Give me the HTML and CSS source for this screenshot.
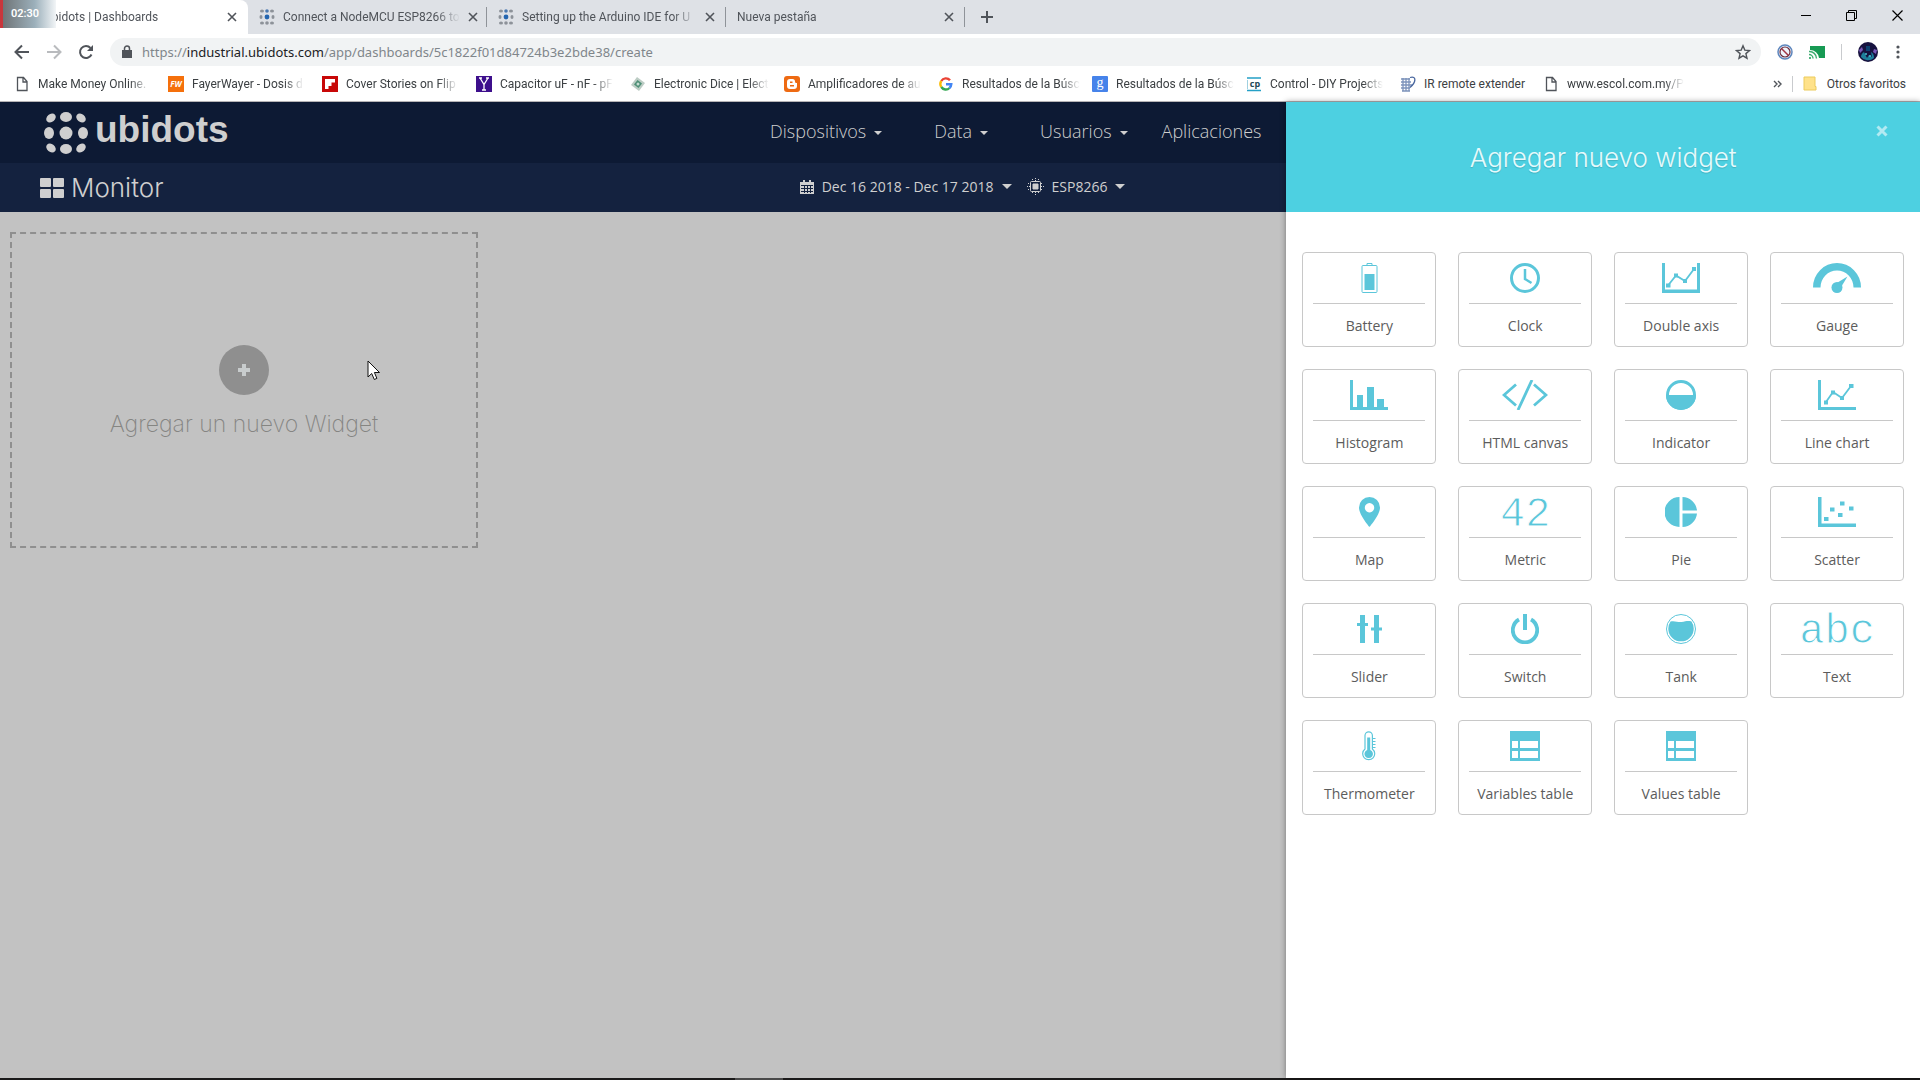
FILE: index.html
```html
<!doctype html>
<html lang="es">
<head>
    <meta charset="UTF-8">
    <meta name="viewport" content="width=device-width, initial-scale=1.0">
    <title>Ubidots | Dashboards</title>
    <link rel="stylesheet" href="styles.css">
</head>
<body>
<!-- shared icons -->
<svg class="sprite" width="0" height="0">
    <symbol id="dots" viewBox="0 0 16 16">
        <g fill="#8d9299">
            <ellipse cx="3" cy="2" rx="2" ry="1.5"/><ellipse cx="13" cy="2" rx="2" ry="1.5"/>
            <ellipse cx="2" cy="8" rx="1.5" ry="2"/><ellipse cx="14" cy="8" rx="1.5" ry="2"/>
            <ellipse cx="3" cy="14" rx="2" ry="1.5"/><ellipse cx="8" cy="14" rx="1.8" ry="1.8"/><ellipse cx="13" cy="14" rx="2" ry="1.5"/>
        </g>
        <circle cx="8" cy="8" r="2.4" fill="#2566b0"/>
        <circle cx="8" cy="2" r="1.8" fill="#4b79b0"/>
    </symbol>
    <symbol id="cross" viewBox="0 0 10 10">
        <path d="M1 1L9 9M9 1L1 9" stroke="currentColor" stroke-width="1.6" fill="none"/>
    </symbol>
    <symbol id="file" viewBox="0 0 16 16">
        <path d="M3.5 1.5h6l3.5 4v9h-9.5zM9 1.5v4.500h4" stroke="#50545a" stroke-width="1.3" fill="#fff"/>
    </symbol>
    <symbol id="table" viewBox="0 0 30 30">
        <path d="M0 0h30v30H0z"/>
        <path d="M2 10h6v7H2zM10 10h18v7H10zM2 20h6v7H2zM10 20h18v7H10z" fill="#fff"/>
    </symbol>
</svg>

<div class="browser">
    <div class="tabs">
        <div class="tab tab-active">
            <span class="tab-title">Ubidots | Dashboards</span>
            <button class="tab-close" aria-label="Cerrar"><svg width="10" height="10"><use href="#cross"/></svg></button>
            <span class="timer">02:30</span>
        </div>
        <div class="tab">
            <svg width="16" height="16"><use href="#dots"/></svg>
            <span class="tab-title">Connect a NodeMCU ESP8266 to</span>
            <button class="tab-close" aria-label="Cerrar"><svg width="10" height="10"><use href="#cross"/></svg></button>
        </div>
        <div class="tab">
            <svg width="16" height="16"><use href="#dots"/></svg>
            <span class="tab-title">Setting up the Arduino IDE for U</span>
            <button class="tab-close" aria-label="Cerrar"><svg width="10" height="10"><use href="#cross"/></svg></button>
        </div>
        <div class="tab">
            <span class="tab-title">Nueva pestaña</span>
            <button class="tab-close" aria-label="Cerrar"><svg width="10" height="10"><use href="#cross"/></svg></button>
        </div>
        <button class="new-tab" aria-label="Nueva pestaña">
            <svg width="12" height="12" viewBox="0 0 12 12"><path d="M6 0v12M0 6h12" stroke="#50545a" stroke-width="2"/></svg>
        </button>
        <div class="window-btns">
            <button aria-label="Minimizar"><svg width="10" height="10" viewBox="0 0 10 10"><path d="M0 5.500h10" stroke="#000"/></svg></button>
            <button aria-label="Restaurar"><svg width="11" height="11" viewBox="0 0 11 11"><path d="M.5 2.500h8v8h-8zM2.500 2.500v-2h8v8h-2" stroke="#000" fill="none"/></svg></button>
            <button aria-label="Cerrar ventana"><svg width="11" height="11" viewBox="0 0 11 11"><path d="M.5.5l10 10M10.500.5l-10 10" stroke="#000" stroke-width="1.200"/></svg></button>
        </div>
    </div>

    <div class="toolbar">
        <button aria-label="Atrás"><svg width="16" height="16" viewBox="0 0 16 16"><path d="M15 8H2M8 1.500L1.500 8L8 14.500" stroke="#50545a" stroke-width="2" fill="none"/></svg></button>
        <button aria-label="Adelante"><svg width="16" height="16" viewBox="0 0 16 16"><path d="M1 8h13M8 1.500L14.500 8L8 14.500" stroke="#b9bbbe" stroke-width="2" fill="none"/></svg></button>
        <button aria-label="Recargar"><svg width="16" height="16" viewBox="0 0 16 16"><path d="M13.500 10.500A6 6 0 1 1 12.500 4" stroke="#50545a" stroke-width="2" fill="none"/><path d="M15 1v6H9z" fill="#50545a"/></svg></button>
        <div class="omnibox">
            <svg width="10" height="14" viewBox="0 0 10 14"><path d="M0 5h10v8H0z" fill="#50545a"/><path d="M2.500 5V3.500a2.500 2.500 0 0 1 5 0V5" stroke="#50545a" stroke-width="1.500" fill="none"/></svg>
            <span class="url">https://<b>industrial.ubidots.com</b>/app/dashboards/5c1822f01d84724b3e2bde38/create</span>
            <button aria-label="Marcar"><svg width="16" height="16" viewBox="0 0 16 16"><path d="M8 1.800l1.800 4.300 4.700.4-3.600 3.100 1.100 4.600L8 11.800l-4 2.400 1.100-4.600L1.500 6.500l4.700-.4z" stroke="#50545a" stroke-width="1.400" fill="none"/></svg></button>
        </div>
        <div class="extensions">
            <button aria-label="Bloqueador"><svg width="16" height="16" viewBox="0 0 16 16"><circle cx="8" cy="8" r="7" fill="#eef3fb" stroke="#5d86bd" stroke-width="1.500"/><circle cx="8" cy="8" r="5" stroke="#6b2c3c" stroke-width="1.200" fill="none"/><path d="M4.500 4.500l7 7" stroke="#a23545" stroke-width="1.500"/></svg></button>
            <button aria-label="Transmitir"><svg width="16" height="13" viewBox="0 0 16 13"><path d="M1 0h15v12h-6A9 9 0 0 0 1 4z" fill="#179a54"/><path d="M0 5.500a7 7 0 0 1 7.500 7M0 8.500a4 4 0 0 1 4 4" stroke="#3fae72" stroke-width="1.400" fill="none"/><circle cx="1" cy="12" r="1" fill="#179a54"/></svg></button>
            <i class="separator"></i>
            <button aria-label="Perfil"><svg width="20" height="20" viewBox="0 0 20 20"><circle cx="10" cy="10" r="10" fill="#17123f"/><path d="M6 10c-2 1-3 3-3 5a9 9 0 0 0 13 1c0-3-1-5-3-6l1 5-3-2-2 3z" fill="#1d7f9b"/><path d="M8 4h4v5H8z" fill="#0c4270"/><path d="M1 8l3-3 1 3-3 3zM16 7l3 1-1 4-3-2z" fill="#7a58b8"/><circle cx="8" cy="12" r="1" fill="#48c3d0"/><circle cx="12" cy="14" r="1" fill="#48c3d0"/></svg></button>
            <button aria-label="Menú"><svg width="8" height="14" viewBox="0 0 8 14" fill="#50545a"><circle cx="4" cy="2" r="1.600"/><circle cx="4" cy="7" r="1.600"/><circle cx="4" cy="12" r="1.600"/></svg></button>
        </div>
    </div>

    <nav class="bookmarks">
        <a class="bookmark" href="#"><svg width="16" height="16"><use href="#file"/></svg><span>Make Money Online.</span></a>
        <a class="bookmark" href="#"><svg width="16" height="16" viewBox="0 0 16 16"><path d="M0 0h16v16H0z" fill="#f5700c"/><text class="fav-fw" x="8" y="11" text-anchor="middle">FW</text></svg><span>FayerWayer - Dosis d</span></a>
        <a class="bookmark" href="#"><svg width="16" height="16" viewBox="0 0 16 16"><path d="M0 0h16v16H0z" fill="#c80808"/><path d="M3 3h10v3.500H9.500V10H6.500v3H3z" fill="#fff"/></svg><span>Cover Stories on Flip</span></a>
        <a class="bookmark" href="#"><svg width="16" height="16" viewBox="0 0 16 16"><path d="M0 0h16v16H0z" fill="#3d0f8c"/><path d="M4 2l4 6.500L12 2M8 8.500V14M3 2h3M10 2h3M6 14h4" stroke="#fff" stroke-width="1.300" fill="none"/></svg><span>Capacitor uF - nF - pF</span></a>
        <a class="bookmark" href="#"><svg width="16" height="16" viewBox="0 0 16 16"><path d="M7 1l8 6-6 8-8-6z" fill="#bcccc4"/><path d="M7.500 4l4.500 3.500L8.500 12 4 8.500z" fill="#4e8f76"/><circle cx="8" cy="8" r="1.500" fill="#c6dcd2"/></svg><span>Electronic Dice | Elect</span></a>
        <a class="bookmark" href="#"><svg width="16" height="16" viewBox="0 0 16 16"><rect width="16" height="16" rx="3" fill="#ee6a12"/><path d="M6 3h2.500A2.500 2.500 0 0 1 11 5.500c0 1 .5 1.500 2 1.500v3a3 3 0 0 1-3 3H6a3 3 0 0 1-3-3V6a3 3 0 0 1 3-3z" fill="#fff"/><path d="M6 6.300h2.500M6 9.800h4" stroke="#ee6a12" stroke-width="1.400"/></svg><span>Amplificadores de au</span></a>
        <a class="bookmark" href="#"><svg width="16" height="16" viewBox="0 0 16 16" fill="none" stroke-width="2.400"><path d="M3.300 5A5.300 5.300 0 0 1 12 4.300" stroke="#ea4335"/><path d="M3.300 5a5.500 5.500 0 0 0 0 6" stroke="#fbbc05"/><path d="M3.300 11a5.300 5.300 0 0 0 8.200 1" stroke="#34a853"/><path d="M11.500 12A5.300 5.300 0 0 0 13.300 8.300H8" stroke="#4285f4"/></svg><span>Resultados de la Búsc</span></a>
        <a class="bookmark" href="#"><svg width="16" height="16" viewBox="0 0 16 16"><rect width="16" height="16" rx="1" fill="#4683ea"/><text class="fav-g" x="8" y="11" text-anchor="middle">g</text></svg><span>Resultados de la Búsc</span></a>
        <a class="bookmark" href="#"><svg width="16" height="16" viewBox="0 0 16 16"><path d="M1 2h14M1 14.500h14" stroke="#25a0c6" stroke-width="1.500"/><path d="M1.500 4v9" stroke="#9fd0df"/><text class="fav-cp" x="9" y="11" text-anchor="middle">cp</text></svg><span>Control - DIY Projects</span></a>
        <a class="bookmark bookmark-short" href="#"><svg width="16" height="16" viewBox="0 0 16 16"><path d="M1 3h9M1 6h10M1 9h11M1 12h9M2 15h8M3 2v13M6 2v13M9 2v13" stroke="#7c93bb" stroke-width="1.300"/><path d="M10 1.500c7-2 6 5 0 10" stroke="#47659e" stroke-width="1.300" fill="none"/></svg><span>IR remote extender</span></a>
        <a class="bookmark" href="#"><svg width="16" height="16"><use href="#file"/></svg><span>www.escol.com.my/P</span></a>
        <div class="bookmarks-end">
            <button aria-label="Más marcadores"><svg width="9" height="8" viewBox="0 0 9 8"><path d="M1 1l3 3-3 3M5 1l3 3-3 3" stroke="#50545a" stroke-width="1.400" fill="none"/></svg></button>
            <i class="separator"></i>
            <a class="others" href="#"><svg width="14" height="16" viewBox="0 0 14 16"><path d="M1 1h11v9.500h1V14H1z" fill="#ffe28a" stroke="#eccb5c"/></svg>Otros favoritos</a>
        </div>
    </nav>
</div>

<div class="app">
    <main class="main">
        <header class="header">
            <a class="logo" href="#">
                <svg width="44" height="42" viewBox="0 0 44 42" fill="#cfcfcf">
                    <ellipse cx="7" cy="6" rx="5.200" ry="4" transform="rotate(-40 7 6)"/><ellipse cx="22" cy="5" rx="6" ry="5"/><ellipse cx="37" cy="6" rx="5.200" ry="4" transform="rotate(40 37 6)"/>
                    <ellipse cx="5" cy="21" rx="5" ry="6"/><ellipse cx="22" cy="21" rx="6.500" ry="6.500"/><ellipse cx="39" cy="21" rx="5" ry="6"/>
                    <ellipse cx="7" cy="36" rx="5.200" ry="4" transform="rotate(40 7 36)"/><ellipse cx="22" cy="37" rx="6" ry="5"/><ellipse cx="37" cy="36" rx="5.200" ry="4" transform="rotate(-40 37 36)"/>
                </svg>
                <span>ubidots</span>
            </a>
            <nav class="menu">
                <a class="menu-wide" href="#">Dispositivos<i class="caret"></i></a>
                <a class="menu-wide" href="#">Data<i class="caret"></i></a>
                <a href="#">Usuarios<i class="caret"></i></a>
                <a href="#">Aplicaciones</a>
            </nav>
        </header>
        <div class="subheader">
            <h1 class="title">
                <svg width="24" height="20" viewBox="0 0 24 20" fill="#cfcfcf"><rect width="11" height="9" rx="1"/><rect x="13" width="11" height="9" rx="1"/><rect y="11" width="11" height="9" rx="1"/><rect x="13" y="11" width="11" height="9" rx="1"/></svg>
                Monitor
            </h1>
            <div class="filters">
                <button class="filter">
                    <svg width="14" height="14" viewBox="0 0 14 14"><path d="M0 2h14v12H0z" fill="#cfcfcf"/><path d="M1 5.500h12M1 8.500h12M1 11.500h12M4.500 5v8M7.500 5v8M10.500 5v8" stroke="#14223f"/><path d="M3 0h2v3H3zM9 0h2v3H9z" fill="#cfcfcf"/></svg>
                    Dec 16 2018 - Dec 17 2018 <i class="caret"></i>
                </button>
                <button class="filter">
                    <svg width="17" height="17" viewBox="0 0 17 17" fill="none" stroke="#cfcfcf"><rect x="3.500" y="3.500" width="10" height="10" rx="1"/><path d="M6 6h5v5H6z" fill="#cfcfcf"/><path d="M5.500 1v2M8.500 0v3M11.500 1v2M5.500 14v2M8.500 14v3M11.500 14v2M1 5.500h2M0 8.500h3M1 11.500h2M14 5.500h2M14 8.500h3M14 11.500h2" stroke-dasharray="1 1"/></svg>
                    ESP8266 <i class="caret"></i>
                </button>
            </div>
        </div>
        <div class="board">
            <button class="add-widget">
                <span class="plus"><svg width="12" height="12" viewBox="0 0 12 12"><path d="M6 0v12M0 6h12" stroke="#c8cccd" stroke-width="4"/></svg></span>
                <span>Agregar un nuevo Widget</span>
            </button>
            <svg class="cursor" width="14" height="21" viewBox="0 0 14 21"><path d="M1 1v16l3.700-3.500 2.600 6 2.600-1.100-2.500-5.900H12.500z" fill="#fff" stroke="#111"/></svg>
        </div>
    </main>

    <aside class="panel">
        <div class="panel-head">
            <button class="panel-close" aria-label="Cerrar panel"><svg width="12" height="12" viewBox="0 0 12 12"><path d="M1.500 1.500l9 9M10.500 1.500l-9 9" stroke="#b2eaf2" stroke-width="3"/></svg></button>
            <h2>Agregar nuevo widget</h2>
        </div>
        <div class="widgets">
            <button class="widget">
                <span class="widget-icon"><svg width="17" height="30" viewBox="0 0 17 30"><rect x="1" y="2.500" width="15" height="27" rx="1" fill="none" stroke="#5bc6da"/><path d="M6 .5h5v2H6z" fill="none" stroke="#5bc6da"/><path d="M3.500 11h10v16h-10z"/></svg></span>
                <span class="widget-name">Battery</span>
            </button>
            <button class="widget">
                <span class="widget-icon"><svg width="30" height="30" viewBox="0 0 30 30" fill="none" stroke="#5bc6da" stroke-width="3"><circle cx="15" cy="15" r="13.500"/><path d="M15 6v10l6.500 4" stroke-width="2.500"/></svg></span>
                <span class="widget-name">Clock</span>
            </button>
            <button class="widget">
                <span class="widget-icon"><svg width="38" height="30" viewBox="0 0 38 30"><path d="M0 0h3v26.500h32V0h3v30H0z"/><path d="M6 22.500l8-10 9 5.500 9-12" fill="none" stroke="#5bc6da" stroke-width="1.800"/><path d="M4 20.500h4.500v4H4zM12 10.500h4v4h-4zM21 16h4v4h-4zM30 4h4v4h-4z"/></svg></span>
                <span class="widget-name">Double axis</span>
            </button>
            <button class="widget">
                <span class="widget-icon"><svg width="48" height="30" viewBox="0 0 48 30"><path d="M0 24.500a24 24.500 0 0 1 48 0h-7.500a16.500 17 0 0 0-33 0z"/><circle cx="24" cy="24.500" r="5.500"/><path d="M20.500 22l14-8.500-8.500 14z"/></svg></span>
                <span class="widget-name">Gauge</span>
            </button>
            <button class="widget">
                <span class="widget-icon"><svg width="38" height="30" viewBox="0 0 38 30"><path d="M0 0h3v27h4V15h6v12h4V7h7v20h3v-8h7v8h4v3H0z"/></svg></span>
                <span class="widget-name">Histogram</span>
            </button>
            <button class="widget">
                <span class="widget-icon"><svg width="46" height="30" viewBox="0 0 46 30" fill="none" stroke="#5bc6da" stroke-width="2.800"><path d="M14 4.500L2 15l12 10.500M32 4.500L44 15 32 25.500M30 0L16 30"/></svg></span>
                <span class="widget-name">HTML canvas</span>
            </button>
            <button class="widget">
                <span class="widget-icon"><svg width="30" height="30" viewBox="0 0 30 30"><circle cx="15" cy="15" r="13.500" fill="none" stroke="#5bc6da" stroke-width="3"/><path d="M0 15h30a15 15 0 0 1-30 0z"/></svg></span>
                <span class="widget-name">Indicator</span>
            </button>
            <button class="widget">
                <span class="widget-icon"><svg width="38" height="30" viewBox="0 0 38 30"><path d="M0 0h3v27h35v3H0z"/><path d="M8 22l7-10 9 6 9-12" fill="none" stroke="#5bc6da" stroke-width="1.800"/><path d="M6 20.500h4v4H6zM13 10.500h4v4h-4zM22 16h4v4h-4zM31 4h4.500v4H31z"/></svg></span>
                <span class="widget-name">Line chart</span>
            </button>
            <button class="widget">
                <span class="widget-icon"><svg width="21" height="30" viewBox="0 0 21 30"><path d="M10.500 0A10.500 10.500 0 0 1 21 10.500C21 18 10.500 30 10.500 30S0 18 0 10.500A10.500 10.500 0 0 1 10.500 0zM10.500 6a4.700 4.700 0 1 0 .01 0z" fill-rule="evenodd"/></svg></span>
                <span class="widget-name">Map</span>
            </button>
            <button class="widget">
                <span class="widget-icon widget-glyph">42</span>
                <span class="widget-name">Metric</span>
            </button>
            <button class="widget">
                <span class="widget-icon"><svg width="32" height="30" viewBox="0 0 32 30"><path d="M14.500 0v30a15 15 0 0 1 0-30zM17.500 0A15 15 0 0 1 32 13.500H17.500zM17.500 16.500H32A15 15 0 0 1 17.500 30z"/></svg></span>
                <span class="widget-name">Pie</span>
            </button>
            <button class="widget">
                <span class="widget-icon"><svg width="38" height="30" viewBox="0 0 38 30"><path d="M0 0h3.500v26.500H38V30H0zM6 20h4.500v4H6zM12 10.500h4.500v4H12zM20 16h4.500v4H20zM22 4.500h4.500v4H22zM31 9.500h4.500v4H31z"/></svg></span>
                <span class="widget-name">Scatter</span>
            </button>
            <button class="widget">
                <span class="widget-icon"><svg width="25" height="30" viewBox="0 0 25 30"><path d="M3 1h5v28H3zM0 9h11v3H0zM17 1h5v28h-5zM14 13.500h11v3H14z"/></svg></span>
                <span class="widget-name">Slider</span>
            </button>
            <button class="widget">
                <span class="widget-icon"><svg width="28" height="30" viewBox="0 0 28 30"><path d="M8 5.500a12.200 12.200 0 1 0 12 0" fill="none" stroke="#5bc6da" stroke-width="3.800"/><path d="M12 0h4v16h-4z"/></svg></span>
                <span class="widget-name">Switch</span>
            </button>
            <button class="widget">
                <span class="widget-icon"><svg width="30" height="30" viewBox="0 0 30 30"><circle cx="15" cy="15" r="14.500" fill="none" stroke="#5bc6da"/><path d="M4.500 7.500c4-1 7 .8 11 .5s6-1.500 10-.5A12.700 12.700 0 1 1 4.500 7.500z"/></svg></span>
                <span class="widget-name">Tank</span>
            </button>
            <button class="widget">
                <span class="widget-icon widget-glyph">abc</span>
                <span class="widget-name">Text</span>
            </button>
            <button class="widget">
                <span class="widget-icon"><svg width="14" height="30" viewBox="0 0 14 30"><path d="M3 18V4.500a3.700 3.700 0 0 1 7.400 0V18a6 6 0 1 1-7.400 0z" fill="none" stroke="#5bc6da" stroke-width="1.200"/><path d="M5.200 19V6.500h3V19a4.200 4.200 0 1 1-3 0zM11 7h2.500v1H11zM11 10h2.500v1H11zM11 13h2.500v1H11zM11 16h2.500v1H11z"/></svg></span>
                <span class="widget-name">Thermometer</span>
            </button>
            <button class="widget">
                <span class="widget-icon"><svg width="30" height="30"><use href="#table"/></svg></span>
                <span class="widget-name">Variables table</span>
            </button>
            <button class="widget">
                <span class="widget-icon"><svg width="30" height="30"><use href="#table"/></svg></span>
                <span class="widget-name">Values table</span>
            </button>
        </div>
    </aside>
</div>
<div class="taskbar"><i></i></div>
</body>
</html>
```

FILE: styles.css
```css
/*reset*/
* {
    box-sizing: border-box;
}
body, h1, h2, button {
    margin: 0;
    padding: 0;
}
body {
    display: flex;
    flex-direction: column;
    min-height: 100vh;
    font: 12px/16px "Open Sans", "Noto Sans", sans-serif;
    color: #50545a;
    background-color: #fff;
}
button {
    border: none;
    background: none;
    font: inherit;
    color: inherit;
}
a {
    color: inherit;
    text-decoration: none;
}
svg {
    flex: none;
    display: block;
}
.sprite {
    position: absolute;
}
/*/reset*/

/* browser */
.browser {
    font-family: Roboto, "Noto Sans", sans-serif;
    border-bottom: 1px solid #b6b4b6;
}
.tabs {
    display: flex;
    align-items: center;
    height: 34px;
    background-color: #dee1e6;
}
.tab {
    position: relative;
    display: flex;
    align-items: center;
    gap: 8px;
    width: 239px;
    height: 20px;
    padding: 0 10px 0 11px;
    border-right: 1px solid #8f9399;
}
.tab-active {
    width: 248px;
    height: 34px;
    padding: 0 11px 0 44px;
    border: none;
    border-radius: 0 8px 0 0;
    background-color: #fff;
}
.tab-title {
    flex: 1;
    white-space: nowrap;
    -webkit-mask-image: linear-gradient(to left, transparent, #000 24px);
    mask-image: linear-gradient(to left, transparent, #000 24px);
}
.timer {
    position: absolute;
    top: 0;
    left: 0;
    width: 56px;
    height: 28px;
    padding-left: 8px;
    border-left: 3px solid #c9363c;
    font-size: 11px;
    line-height: 28px;
    font-weight: 600;
    color: #fff;
    background: linear-gradient(to right, #6f7477, #9cb0bb 60%, #f2f5f7);
}
.new-tab {
    padding: 0 16px;
}
.window-btns {
    display: flex;
    gap: 35px;
    margin-left: auto;
    padding: 0 17px 4px 0;
}
.toolbar {
    display: flex;
    align-items: center;
    gap: 16px;
    padding: 4px 18px 2px 14px;
}
.omnibox {
    flex: 1;
    display: flex;
    align-items: center;
    gap: 10px;
    height: 28px;
    padding: 0 10px 0 12px;
    border-radius: 14px;
    background-color: #f1f3f4;
}
.url {
    flex: 1;
    font-family: "Noto Sans", sans-serif;
    font-size: 13px;
    color: #80868b;
}
.url b {
    font-weight: 400;
    color: #202124;
}
.extensions {
    display: flex;
    align-items: center;
    gap: 16px;
}
.separator {
    width: 1px;
    height: 16px;
    background-color: #c9cbce;
}
.bookmarks {
    display: flex;
    align-items: center;
    height: 33px;
    padding: 0 14px 2px;
    color: #3c4043;
}
.bookmark {
    display: flex;
    align-items: center;
    gap: 8px;
    width: 154px;
    padding-right: 18px;
}
.bookmark span {
    flex: 1;
    white-space: nowrap;
    -webkit-mask-image: linear-gradient(to left, transparent, #000 20px);
    mask-image: linear-gradient(to left, transparent, #000 20px);
}
.bookmark-short {
    width: 143px;
    padding-right: 12px;
}
.bookmark-short span {
    -webkit-mask-image: none;
    mask-image: none;
}
.bookmarks-end,
.others {
    display: flex;
    align-items: center;
    gap: 10px;
}
.bookmarks-end {
    margin-left: auto;
}
.fav-fw {
    font: italic bold 8px "Open Sans", sans-serif;
    fill: #fff;
}
.fav-g {
    font: 14px "Liberation Serif", serif;
    fill: #fff;
}
.fav-cp {
    font: bold 9px "Open Sans", sans-serif;
    fill: #1d4756;
}

/* app */
.app {
    flex: 1;
    display: flex;
}
.main {
    flex: 67;
    display: flex;
    flex-direction: column;
    background-color: #c2c2c2;
}
.header {
    display: flex;
    align-items: center;
    justify-content: space-between;
    height: 61px;
    padding: 0 25px 0 44px;
    color: #cfcfcf;
    background-color: #0d1a34;
}
.logo {
    display: flex;
    align-items: center;
    gap: 7px;
    font: bold 37px/40px "Liberation Sans", sans-serif;
}
.logo span {
    padding-bottom: 6px;
}
.menu {
    display: flex;
    gap: 34px;
    padding-bottom: 4px;
    font-size: 18px;
    line-height: 24px;
    font-weight: 300;
}
.menu-wide {
    padding-right: 18px;
}
.caret {
    display: inline-block;
    margin-left: 8px;
    border: 4px solid transparent;
    border-top-color: currentColor;
    border-bottom: none;
    vertical-align: middle;
}
.subheader {
    display: flex;
    align-items: center;
    justify-content: space-between;
    height: 49px;
    padding: 0 161px 0 40px;
    color: #cfcfcf;
    background-color: #14223f;
}
.title {
    display: flex;
    align-items: center;
    gap: 7px;
    font: 300 26px/30px Inter, sans-serif;
}
.filters {
    display: flex;
    gap: 15px;
    padding-bottom: 2px;
}
.filter {
    display: flex;
    align-items: center;
    gap: 8px;
    font-size: 14px;
}
.filter .caret {
    margin-left: 0;
    border-width: 5px;
    border-bottom: none;
}
.board {
    position: relative;
    flex: 1;
    padding: 20px 10px;
}
.add-widget {
    display: flex;
    flex-direction: column;
    align-items: center;
    justify-content: center;
    gap: 16px;
    width: 468px;
    max-width: 100%;
    height: 316px;
    padding-top: 2px;
    border: 2px dashed #8f8f8f;
    font: 200 23px/26px Inter, sans-serif;
    color: #858582;
}
.plus {
    display: flex;
    align-items: center;
    justify-content: center;
    width: 50px;
    height: 50px;
    border-radius: 50%;
    background-color: #8f8f8f;
}
.cursor {
    position: absolute;
    top: 148px;
    left: 367px;
}

/* panel */
.panel {
    position: relative;
    flex: 33;
    background-color: #fff;
    box-shadow: 0 0 6px rgba(0, 0, 0, .4);
}
.panel-head {
    position: relative;
    display: flex;
    align-items: center;
    justify-content: center;
    height: 110px;
    padding-top: 2px;
    color: #e6fafc;
    background-color: #4dd0e1;
}
.panel-head h2 {
    font: 300 26px/30px Inter, sans-serif;
    text-shadow: 0 1px 1px rgba(0, 0, 0, .15);
}
.panel-close {
    position: absolute;
    top: 23px;
    right: 32px;
}
.widgets {
    display: grid;
    grid-template-columns: repeat(4, 1fr);
    gap: 22px;
    padding: 40px 16px;
}
.widget {
    display: flex;
    flex-direction: column;
    height: 95px;
    padding: 0 10px;
    border: 1px solid #c8c8c8;
    border-radius: 4px;
    text-align: center;
}
.widget-icon {
    display: flex;
    align-items: center;
    justify-content: center;
    align-self: stretch;
    height: 51px;
    border-bottom: 1px solid #c8c8c8;
    color: #5bc6da;
    fill: #5bc6da;
}
.widget-glyph {
    padding-top: 6px;
    font: 42px/44px "Liberation Mono", monospace;
    -webkit-text-stroke: 1px #fff;
}
.widget-name {
    align-self: center;
    padding-top: 13px;
    font-size: 14px;
    line-height: 18px;
    color: #5c5c5c;
    white-space: nowrap;
}

/* taskbar */
.taskbar {
    height: 2px;
    padding-left: 735px;
    background-color: #1b1a1a;
}
.taskbar i {
    display: block;
    width: 48px;
    height: 2px;
    background-color: #4a4a4a;
}
```
